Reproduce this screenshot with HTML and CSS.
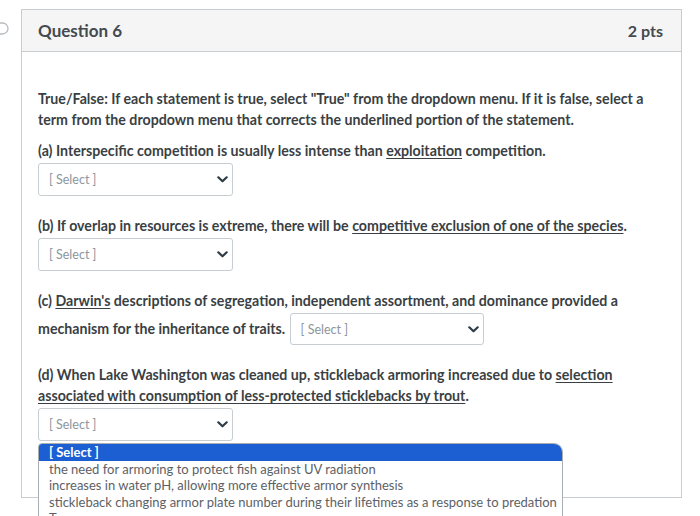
FILE: index.html
```html
<!DOCTYPE html>
<html lang="en">
<head>
<meta charset="utf-8">
<title>Question 6</title>
<link rel="stylesheet" href="styles.css">
</head>
<body>
<div class="page">
  <div class="gutter">
    <svg class="flag" width="21" height="40" viewBox="0 0 21 40" aria-hidden="true">
      <rect x="-6" y="14" width="14" height="11" rx="5.5" fill="none" stroke="#b5bcc1" stroke-width="1.3"/>
    </svg>
  </div>
  <div class="card">
    <div class="card-head">
      <span class="q-title">Question 6</span>
      <span class="q-pts">2 pts</span>
    </div>
    <div class="card-body">
      <p class="txt intro">True/False: If each statement is true, select "True" from the dropdown menu. If it is false, select a term from the dropdown menu that corrects the underlined portion of the statement.</p>

      <div class="item">
        <p class="txt stmt">(a) Interspecific competition is usually less intense than <u>exploitation</u> competition.</p>
        <div class="sel"><span class="sel-text">[ Select ]</span><svg class="chev" width="11" height="7" viewBox="0 0 11 7"><path d="M1.3 1.3 L5.5 5.3 L9.7 1.3" fill="none" stroke="#2d3b45" stroke-width="2.2" stroke-linecap="round" stroke-linejoin="round"/></svg></div>
      </div>

      <div class="item">
        <p class="txt stmt">(b) If overlap in resources is extreme, there will be <u>competitive exclusion of one of the species</u>.</p>
        <div class="sel"><span class="sel-text">[ Select ]</span><svg class="chev" width="11" height="7" viewBox="0 0 11 7"><path d="M1.3 1.3 L5.5 5.3 L9.7 1.3" fill="none" stroke="#2d3b45" stroke-width="2.2" stroke-linecap="round" stroke-linejoin="round"/></svg></div>
      </div>

      <div class="item">
        <p class="txt stmt-inline">(c) <u>Darwin's</u> descriptions of segregation, independent assortment, and dominance provided a mechanism for the inheritance of traits. <span class="sel sel-inline"><span class="sel-text">[ Select ]</span><svg class="chev" width="11" height="7" viewBox="0 0 11 7"><path d="M1.3 1.3 L5.5 5.3 L9.7 1.3" fill="none" stroke="#2d3b45" stroke-width="2.2" stroke-linecap="round" stroke-linejoin="round"/></svg></span></p>
      </div>

      <div class="item last">
        <p class="txt stmt">(d) When Lake Washington was cleaned up, stickleback armoring increased due to <u>selection associated with consumption of less-protected sticklebacks by trout</u>.</p>
        <div class="sel-wrap">
          <div class="sel"><span class="sel-text">[ Select ]</span><svg class="chev" width="11" height="7" viewBox="0 0 11 7"><path d="M1.3 1.3 L5.5 5.3 L9.7 1.3" fill="none" stroke="#2d3b45" stroke-width="2.2" stroke-linecap="round" stroke-linejoin="round"/></svg></div>
          <ul class="popup">
            <li class="opt active">[ Select ]</li>
            <li class="opt">the need for armoring to protect fish against UV radiation</li>
            <li class="opt">increases in water pH, allowing more effective armor synthesis</li>
            <li class="opt">stickleback changing armor plate number during their lifetimes as a response to predation</li>
            <li class="opt">True</li>
          </ul>
        </div>
      </div>
    </div>
  </div>
</div>
</body>
</html>
```

FILE: styles.css
```css
html, body {
  margin: 0;
  padding: 0;
  background: #ffffff;
}
body {
  width: 700px;
  height: 516px;
  overflow: hidden;
  font-family: Lato, "Open Sans", "Liberation Sans", sans-serif;
  color: #3a3f44;
}
.page {
  display: flex;
  align-items: flex-start;
  padding-top: 9px;
}
.gutter {
  width: 21px;
  flex: none;
}
.flag {
  display: block;
}
.card {
  width: 661px;
  flex: none;
  border: 1px solid #c7cdd1;
  box-sizing: border-box;
  background: #fff;
}
.card-head {
  height: 42px;
  box-sizing: border-box;
  background: #f5f5f5;
  border-bottom: 1px solid #c7cdd1;
  display: flex;
  align-items: center;
  justify-content: space-between;
  padding: 0 18px 0 16px;
  color: #444a4f;
  font-weight: 700;
}
.q-title {
  font-size: 17px;
}
.q-pts {
  font-size: 16px;
}
.card-body {
  padding: 36px 18px 56px 16px;
}
.txt {
  margin: 0;
  font-size: 14.2px;
  line-height: 21px;
  font-weight: 700;
  color: #3a3f44;
}
.txt u {
  text-decoration-thickness: 1px;
  text-underline-offset: 2px;
}
.intro {
  margin-bottom: 10px;
}
.item {
  margin-bottom: 19px;
}
.item.last {
  margin-bottom: 0;
}
.stmt {
  margin-bottom: 2px;
}
.stmt-inline {
  line-height: 21px;
}
.sel {
  width: 195px;
  height: 33px;
  box-sizing: border-box;
  border: 1px solid #c7cdd1;
  border-radius: 3px;
  background: #fff;
  display: flex;
  align-items: center;
  justify-content: space-between;
  padding: 0 4px 0 10px;
}
.sel-inline {
  display: inline-flex;
  vertical-align: baseline;
  height: 32px;
  width: 194px;
  margin: 2px 0 0 1px;
  font-weight: 400;
}
.sel-text {
  font-size: 12.5px;
  font-weight: 400;
  color: #8c969d;
}
.chev {
  display: block;
}
.sel-wrap {
  position: relative;
}
.popup {
  position: absolute;
  top: 35px;
  left: 0;
  width: 525px;
  margin: 0;
  padding: 0;
  list-style: none;
  background: #fff;
  border: 1px solid #a9aeb2;
  border-radius: 4px 9px 0 0;
  overflow: hidden;
  box-sizing: border-box;
}
.opt {
  font-size: 13px;
  line-height: 16.5px;
  padding: 0 0 0 10px;
  color: #5d6166;
  white-space: nowrap;
}
.opt.active {
  background: #1b5fd3;
  color: #ffffff;
  font-weight: 700;
}
```
